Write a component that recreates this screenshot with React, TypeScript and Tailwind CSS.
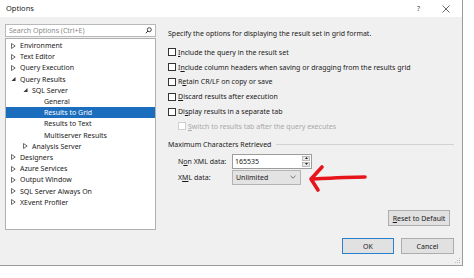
import React from "react";

const Closed = () => (
  <svg width="5" height="6" viewBox="0 0 5 6" className="shrink-0">
    <path d="M0.5 0.5 L4.2 3 L0.5 5.5 Z" fill="none" stroke="#5a5a5a" strokeWidth="0.9" />
  </svg>
);
const Open = () => (
  <svg width="5" height="6" viewBox="0 0 5 6" className="shrink-0">
    <path d="M4.5 1 L4.5 5 L0.5 5 Z" fill="#333" />
  </svg>
);

type Item = { label: string; level: number; kind: "closed" | "open" | "none"; selected?: boolean };
const items: Item[] = [
  { label: "Environment", level: 0, kind: "closed" },
  { label: "Text Editor", level: 0, kind: "closed" },
  { label: "Query Execution", level: 0, kind: "closed" },
  { label: "Query Results", level: 0, kind: "open" },
  { label: "SQL Server", level: 1, kind: "open" },
  { label: "General", level: 2, kind: "none" },
  { label: "Results to Grid", level: 2, kind: "none", selected: true },
  { label: "Results to Text", level: 2, kind: "none" },
  { label: "Multiserver Results", level: 2, kind: "none" },
  { label: "Analysis Server", level: 1, kind: "closed" },
  { label: "Designers", level: 0, kind: "closed" },
  { label: "Azure Services", level: 0, kind: "closed" },
  { label: "Output Window", level: 0, kind: "closed" },
  { label: "SQL Server Always On", level: 0, kind: "closed" },
  { label: "XEvent Profiler", level: 0, kind: "closed" },
];

const indent = ["pl-[5px]", "pl-[17px]", "pl-[29px]"];

const Check = ({ disabled }: { disabled?: boolean }) => (
  <div
    className={
      "w-[8px] h-[8px] shrink-0 border bg-white " +
      (disabled ? "border-[#cfcfcf] bg-[#f4f4f4]" : "border-[#333]")
    }
  />
);

const U = ({ children }: { children: React.ReactNode }) => <span className="underline underline-offset-[1px]">{children}</span>;

export default function App() {
  return (
    <div
      className="w-[474px] h-[278px] bg-white overflow-hidden text-[7px] leading-none text-[#1a1a1a]"
      style={{ fontFamily: '"Noto Sans", "Open Sans", sans-serif' }}
    >
      <div className="w-[463px] h-[266px] border-r border-b border-[#9a9a9a] flex flex-col bg-[#f0f0f0]">
        {/* title bar */}
        <div className="h-[17px] bg-white flex items-center pl-[6px] shrink-0">
          <span className="flex-1 text-[7.5px] text-[#222]">Options</span>
          <span className="text-[7px] text-[#444] mr-[22px]">?</span>
          <svg width="8" height="8" viewBox="0 0 8 8" className="mr-[12px]">
            <path d="M0.5 0.5 L7.5 7.5 M7.5 0.5 L0.5 7.5" stroke="#444" strokeWidth="0.8" />
          </svg>
        </div>

        {/* main */}
        <div className="flex flex-1 pt-[7px] relative">
          {/* left */}
          <div className="w-[151px] ml-[5px] flex flex-col shrink-0">
            <div className="h-[13px] border border-[#b9b9b9] bg-white flex items-center pl-[3px] pr-[3px]">
              <span className="flex-1 text-[#8a8a8a]">Search Options (Ctrl+E)</span>
              <svg width="7" height="7" viewBox="0 0 7 7">
                <circle cx="4.3" cy="2.7" r="2" fill="none" stroke="#333" strokeWidth="0.9" />
                <path d="M3 4 L0.8 6.2" stroke="#333" strokeWidth="1" />
              </svg>
            </div>
            <div className="mt-[1px] h-[192px] border border-[#b0b0b0] bg-white pt-[1px]">
              {items.map((it) => (
                <div
                  key={it.label}
                  className={
                    "h-[11.2px] flex items-center gap-[4px] " +
                    indent[it.level] +
                    (it.selected ? " bg-[#1b6dbd] text-white" : "")
                  }
                >
                  <div className="w-[5px] flex items-center">
                    {it.kind === "closed" ? <Closed /> : it.kind === "open" ? <Open /> : null}
                  </div>
                  <span>{it.label}</span>
                </div>
              ))}
            </div>
          </div>

          {/* right */}
          <div className="flex-1 flex flex-col pl-[12px] pr-[7px]">
            <div className="mt-[4px] h-[10px] flex items-center">Specify the options for displaying the result set in grid format.</div>
            <div className="mt-[7px] flex flex-col">
              {[
                [<><U>I</U>nclude the query in the result set</>, false, false],
                [<>I<U>n</U>clude column headers when saving or dragging from the results grid</>, false, false],
                [<>R<U>e</U>tain CR/LF on copy or save</>, false, false],
                [<><U>D</U>iscard results after execution</>, false, false],
                [<>Di<U>s</U>play results in a separate tab</>, false, false],
                [<><U>S</U>witch to results tab after the query executes</>, true, true],
              ].map(([label, indented, disabled], i) => (
                <div
                  key={i}
                  className={
                    "h-[14.8px] flex items-center gap-[2px] " +
                    (indented ? "pl-[10px] text-[#a8a8a8]" : "")
                  }
                >
                  <Check disabled={disabled as boolean} />
                  <span>{label as React.ReactNode}</span>
                </div>
              ))}
            </div>

            <div className="mt-[6px] flex items-center h-[10px]">
              <span>Maximum Characters Retrieved</span>
              <div className="flex-1 h-px bg-[#d2d2d2] ml-[5px] mr-[1px]" />
            </div>
            <div className="pl-[10px] mt-[4px] flex flex-col gap-[1px]">
              <div className="flex items-center h-[15px]">
                <span className="w-[54px]">N<U>o</U>n XML data:</span>
                <div className="w-[80px] h-[15px] border border-[#9c9c9c] bg-white flex items-center pl-[2px]">
                  <span className="flex-1">165535</span>
                  <div className="w-[8px] h-[13px] flex flex-col mr-[1px] gap-[1px] justify-center">
                    <div className="h-[5px] bg-[#e8e8e8] border border-[#bbb] flex items-center justify-center">
                      <svg width="3" height="2" viewBox="0 0 3 2"><path d="M0 2 L1.5 0 L3 2Z" fill="#222" /></svg>
                    </div>
                    <div className="h-[5px] bg-[#e8e8e8] border border-[#bbb] flex items-center justify-center">
                      <svg width="3" height="2" viewBox="0 0 3 2"><path d="M0 0 L1.5 2 L3 0Z" fill="#222" /></svg>
                    </div>
                  </div>
                </div>
              </div>
              <div className="flex items-center h-[15px]">
                <span className="w-[54px]">X<U>M</U>L data:</span>
                <div className="w-[69px] h-[15px] border border-[#b4b4b4] bg-[#e3e3e3] flex items-center pl-[3px] pr-[4px]">
                  <span className="flex-1">Unlimited</span>
                  <svg width="6" height="4" viewBox="0 0 6 4"><path d="M0.5 0.8 L3 3.2 L5.5 0.8" fill="none" stroke="#555" strokeWidth="0.8" /></svg>
                </div>
              </div>
            </div>

            <div className="flex-1" />
            <div className="flex justify-end mb-[4px] pr-[5px]">
              <div className="w-[62px] h-[16px] border border-[#adadad] bg-[#e1e1e1] flex items-center justify-center">
                <span><U>R</U>eset to Default</span>
              </div>
            </div>
          </div>

          {/* red arrow */}
          <svg className="absolute left-[306px] top-[145px]" width="64" height="34" viewBox="0 0 64 34">
            <path d="M59 15 C45 15 25 16 7 17" fill="none" stroke="#e8141c" strokeWidth="3.6" strokeLinecap="round" />
            <path d="M16 5 L5 17 L12 28" fill="none" stroke="#e8141c" strokeWidth="3.6" strokeLinecap="round" strokeLinejoin="round" />
          </svg>
        </div>

        {/* bottom buttons */}
        <div className="h-[35px] flex items-start justify-end pt-[8px] pr-[8px] gap-[7px] shrink-0 relative">
          <div className="w-[52px] h-[16px] border border-[#2a7fcf] bg-[#e1e1e1] flex items-center justify-center">OK</div>
          <div className="w-[53px] h-[16px] border border-[#adadad] bg-[#e1e1e1] flex items-center justify-center">Cancel</div>
          <svg className="absolute right-[1px] bottom-[1px]" width="6" height="6" viewBox="0 0 6 6">
            <rect x="4" y="0" width="1" height="1" fill="#bbb" />
            <rect x="2" y="2" width="1" height="1" fill="#bbb" />
            <rect x="4" y="2" width="1" height="1" fill="#bbb" />
            <rect x="0" y="4" width="1" height="1" fill="#bbb" />
            <rect x="2" y="4" width="1" height="1" fill="#bbb" />
            <rect x="4" y="4" width="1" height="1" fill="#bbb" />
          </svg>
        </div>
      </div>
    </div>
  );
}
